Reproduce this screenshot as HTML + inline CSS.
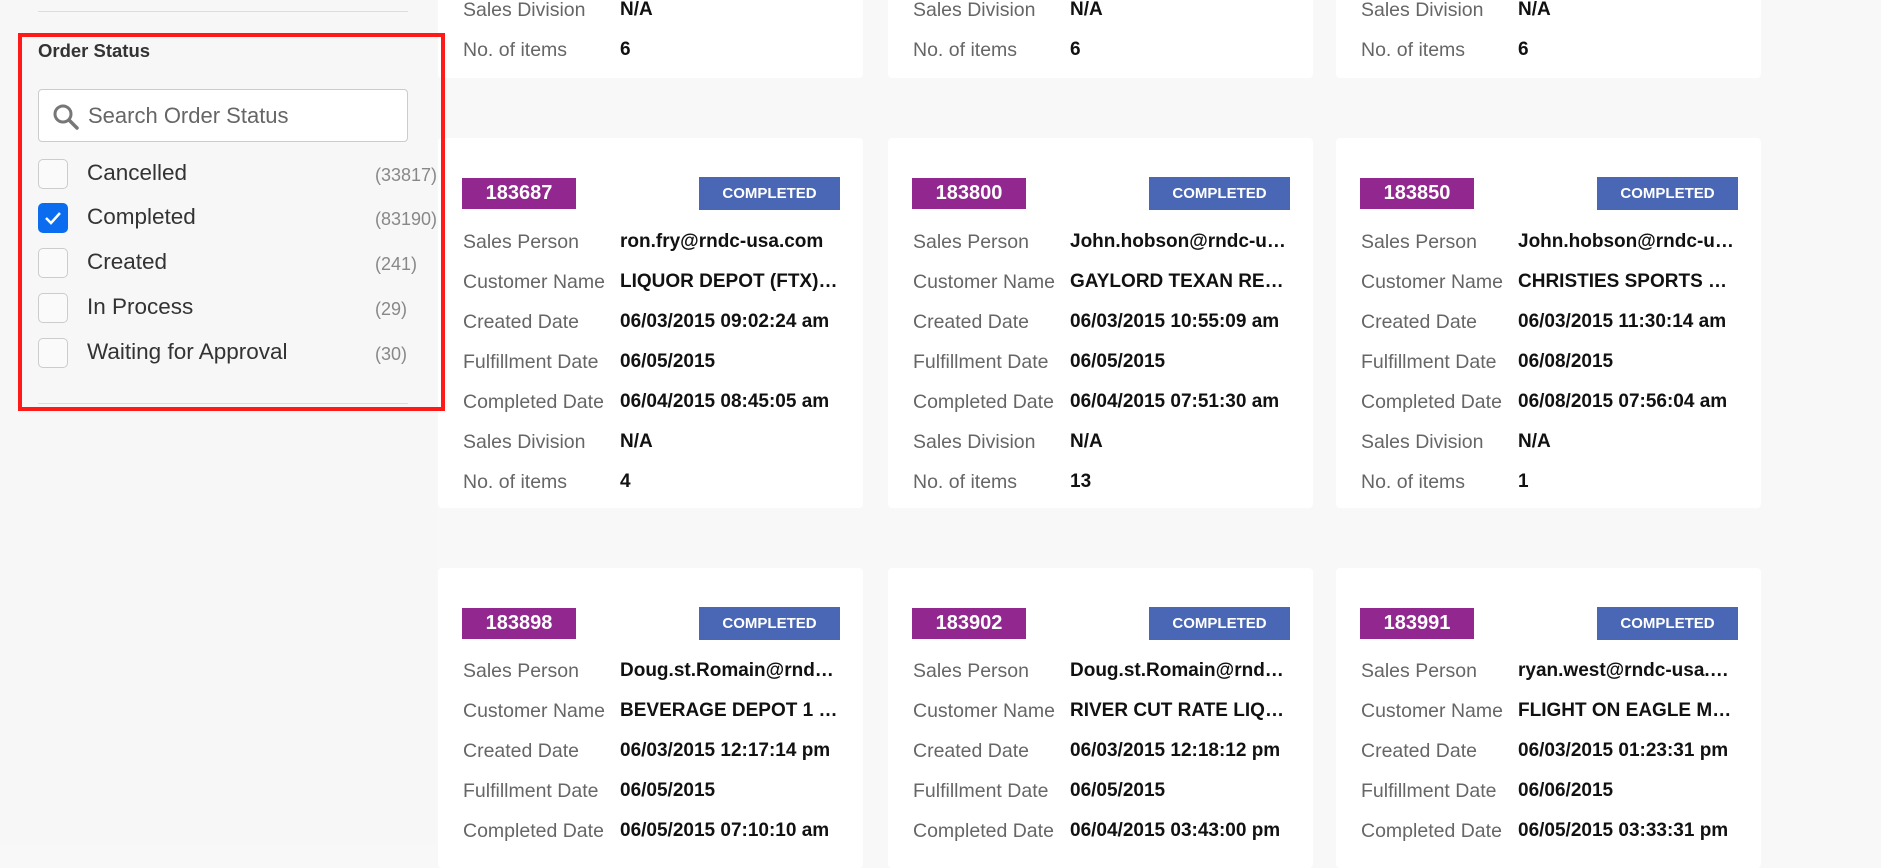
<!DOCTYPE html>
<html><head><meta charset="utf-8">
<style>
*{box-sizing:border-box;margin:0;padding:0}
body{width:1881px;height:845px;overflow:hidden;background:#f8f8f8;font-family:"Liberation Sans",sans-serif;position:relative}
.abs{position:absolute}
.side{position:absolute;left:0;top:0;width:437px;height:845px;background:#f7f7f7}
.hr{position:absolute;left:38px;width:370px;height:1px;background:#ddd}
.red{position:absolute;left:18px;top:33px;width:427px;height:378px;border:4px solid #ff1a1a;z-index:5}
.title{position:absolute;left:38px;top:40px;font-size:18.5px;font-weight:bold;color:#333}
.search{position:absolute;left:38px;top:89px;width:370px;height:53px;border:1px solid #ccc;border-radius:4px;background:#fff}
.search span{position:absolute;left:49px;top:13px;font-size:22px;color:#666}
.cb{position:absolute;left:38px;width:30px;height:30px;border:1px solid #ccc;border-radius:5px;background:#fafafa}
.cb.on{background:#0b6cf0;border-color:#0b6cf0}
.lbl{position:absolute;left:87px;font-size:22.5px;color:#333}
.cnt{position:absolute;left:375px;font-size:18px;color:#888}
.card{position:absolute;width:425px;background:#fff;border-radius:4px}
.id{position:absolute;left:24px;width:114px;height:31px;background:#92278f;color:#fff;font-weight:bold;font-size:20px;text-align:center;line-height:31px}
.st{position:absolute;right:23px;width:141px;height:33px;background:#4a67b5;color:#fff;font-weight:bold;font-size:15px;text-align:center;line-height:33px}
.row{position:absolute;left:25px;width:390px;height:24px;font-size:19.5px;line-height:24px;white-space:nowrap}
.row .l{position:absolute;left:0;color:#666}
.row .v{position:absolute;left:157px;width:220px;overflow:hidden;text-overflow:ellipsis;color:#111;font-weight:bold;font-size:19px}
</style></head><body>
<div class="side"></div>
<div class="hr" style="top:11px"></div>
<div class="title">Order Status</div>
<div class="search">
<svg class="abs" style="left:12px;top:12px" width="30" height="30" viewBox="0 0 30 30"><circle cx="12" cy="12" r="8" fill="none" stroke="#777" stroke-width="3"/><line x1="18" y1="18" x2="26" y2="26" stroke="#777" stroke-width="3.5" stroke-linecap="round"/></svg>
<span>Search Order Status</span></div>
<div class="cb" style="top:159px"></div><div class="lbl" style="top:160px">Cancelled</div><div class="cnt" style="top:165px">(33817)</div>
<div class="cb on" style="top:203px"><svg width="28" height="28" viewBox="0 0 28 28"><path d="M7 14 L12 19 L21 9" fill="none" stroke="#fff" stroke-width="2.5"/></svg></div><div class="lbl" style="top:204px">Completed</div><div class="cnt" style="top:209px">(83190)</div>
<div class="cb" style="top:248px"></div><div class="lbl" style="top:249px">Created</div><div class="cnt" style="top:254px">(241)</div>
<div class="cb" style="top:293px"></div><div class="lbl" style="top:294px">In Process</div><div class="cnt" style="top:299px">(29)</div>
<div class="cb" style="top:338px"></div><div class="lbl" style="top:339px">Waiting for Approval</div><div class="cnt" style="top:344px">(30)</div>
<div class="hr" style="top:403px"></div>

<!-- top partial cards -->
<div class="card" style="left:438px;top:-10px;height:88px"><div class="row" style="top:8px"><span class="l">Sales Division</span><span class="v">N/A</span></div><div class="row" style="top:48px"><span class="l">No. of items</span><span class="v">6</span></div></div>
<div class="card" style="left:888px;top:-10px;height:88px"><div class="row" style="top:8px"><span class="l">Sales Division</span><span class="v">N/A</span></div><div class="row" style="top:48px"><span class="l">No. of items</span><span class="v">6</span></div></div>
<div class="card" style="left:1336px;top:-10px;height:88px"><div class="row" style="top:8px"><span class="l">Sales Division</span><span class="v">N/A</span></div><div class="row" style="top:48px"><span class="l">No. of items</span><span class="v">6</span></div></div>

<!-- row 1 -->
<div class="card" style="left:438px;top:138px;height:370px">
<div class="id" style="top:40px">183687</div><div class="st" style="top:39px">COMPLETED</div>
<div class="row" style="top:92px"><span class="l">Sales Person</span><span class="v">ron.fry@rndc-usa.com</span></div>
<div class="row" style="top:132px"><span class="l">Customer Name</span><span class="v">LIQUOR DEPOT (FTX) (FTX)</span></div>
<div class="row" style="top:172px"><span class="l">Created Date</span><span class="v">06/03/2015 09:02:24 am</span></div>
<div class="row" style="top:212px"><span class="l">Fulfillment Date</span><span class="v">06/05/2015</span></div>
<div class="row" style="top:252px"><span class="l">Completed Date</span><span class="v">06/04/2015 08:45:05 am</span></div>
<div class="row" style="top:292px"><span class="l">Sales Division</span><span class="v">N/A</span></div>
<div class="row" style="top:332px"><span class="l">No. of items</span><span class="v">4</span></div>
</div>
<div class="card" style="left:888px;top:138px;height:370px">
<div class="id" style="top:40px">183800</div><div class="st" style="top:39px">COMPLETED</div>
<div class="row" style="top:92px"><span class="l">Sales Person</span><span class="v">John.hobson@rndc-usa.com</span></div>
<div class="row" style="top:132px"><span class="l">Customer Name</span><span class="v">GAYLORD TEXAN RESORT</span></div>
<div class="row" style="top:172px"><span class="l">Created Date</span><span class="v">06/03/2015 10:55:09 am</span></div>
<div class="row" style="top:212px"><span class="l">Fulfillment Date</span><span class="v">06/05/2015</span></div>
<div class="row" style="top:252px"><span class="l">Completed Date</span><span class="v">06/04/2015 07:51:30 am</span></div>
<div class="row" style="top:292px"><span class="l">Sales Division</span><span class="v">N/A</span></div>
<div class="row" style="top:332px"><span class="l">No. of items</span><span class="v">13</span></div>
</div>
<div class="card" style="left:1336px;top:138px;height:370px">
<div class="id" style="top:40px">183850</div><div class="st" style="top:39px">COMPLETED</div>
<div class="row" style="top:92px"><span class="l">Sales Person</span><span class="v">John.hobson@rndc-usa.com</span></div>
<div class="row" style="top:132px"><span class="l">Customer Name</span><span class="v">CHRISTIES SPORTS BAR AND GRILL</span></div>
<div class="row" style="top:172px"><span class="l">Created Date</span><span class="v">06/03/2015 11:30:14 am</span></div>
<div class="row" style="top:212px"><span class="l">Fulfillment Date</span><span class="v">06/08/2015</span></div>
<div class="row" style="top:252px"><span class="l">Completed Date</span><span class="v">06/08/2015 07:56:04 am</span></div>
<div class="row" style="top:292px"><span class="l">Sales Division</span><span class="v">N/A</span></div>
<div class="row" style="top:332px"><span class="l">No. of items</span><span class="v">1</span></div>
</div>

<!-- row 2 -->
<div class="card" style="left:438px;top:568px;height:300px">
<div class="id" style="top:40px">183898</div><div class="st" style="top:39px">COMPLETED</div>
<div class="row" style="top:91px"><span class="l">Sales Person</span><span class="v">Doug.st.Romain@rndc-usa.com</span></div>
<div class="row" style="top:131px"><span class="l">Customer Name</span><span class="v">BEVERAGE DEPOT 1 (2345)</span></div>
<div class="row" style="top:171px"><span class="l">Created Date</span><span class="v">06/03/2015 12:17:14 pm</span></div>
<div class="row" style="top:211px"><span class="l">Fulfillment Date</span><span class="v">06/05/2015</span></div>
<div class="row" style="top:251px"><span class="l">Completed Date</span><span class="v">06/05/2015 07:10:10 am</span></div>
</div>
<div class="card" style="left:888px;top:568px;height:300px">
<div class="id" style="top:40px">183902</div><div class="st" style="top:39px">COMPLETED</div>
<div class="row" style="top:91px"><span class="l">Sales Person</span><span class="v">Doug.st.Romain@rndc-usa.com</span></div>
<div class="row" style="top:131px"><span class="l">Customer Name</span><span class="v">RIVER CUT RATE LIQUOR STORE</span></div>
<div class="row" style="top:171px"><span class="l">Created Date</span><span class="v">06/03/2015 12:18:12 pm</span></div>
<div class="row" style="top:211px"><span class="l">Fulfillment Date</span><span class="v">06/05/2015</span></div>
<div class="row" style="top:251px"><span class="l">Completed Date</span><span class="v">06/04/2015 03:43:00 pm</span></div>
</div>
<div class="card" style="left:1336px;top:568px;height:300px">
<div class="id" style="top:40px">183991</div><div class="st" style="top:39px">COMPLETED</div>
<div class="row" style="top:91px"><span class="l">Sales Person</span><span class="v">ryan.west@rndc-usa.com</span></div>
<div class="row" style="top:131px"><span class="l">Customer Name</span><span class="v">FLIGHT ON EAGLE MOUNTAIN</span></div>
<div class="row" style="top:171px"><span class="l">Created Date</span><span class="v">06/03/2015 01:23:31 pm</span></div>
<div class="row" style="top:211px"><span class="l">Fulfillment Date</span><span class="v">06/06/2015</span></div>
<div class="row" style="top:251px"><span class="l">Completed Date</span><span class="v">06/05/2015 03:33:31 pm</span></div>
</div>
<div class="red"></div>
</body></html>
